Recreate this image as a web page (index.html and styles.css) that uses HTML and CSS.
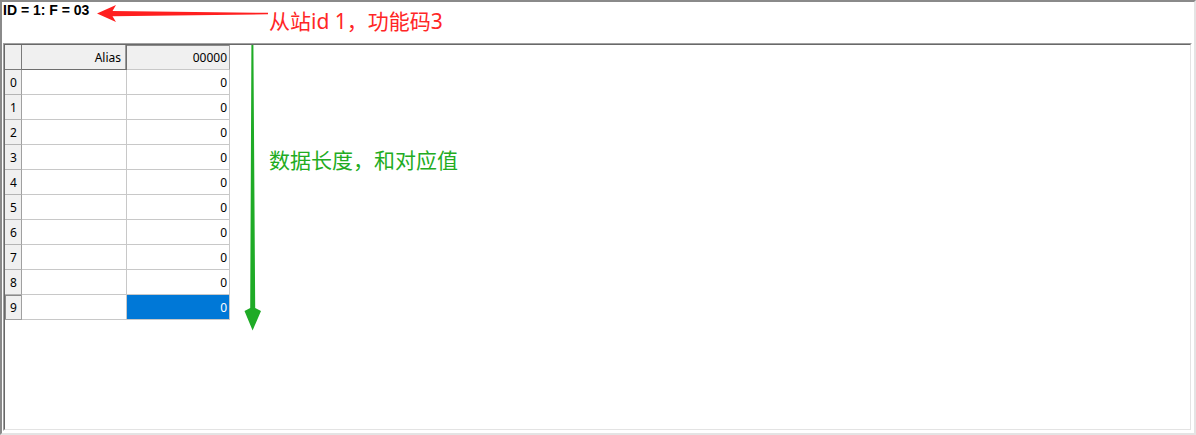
FILE: index.html
```html
<!DOCTYPE html>
<html>
<head>
<meta charset="utf-8">
<link rel="stylesheet" href="styles.css">
</head>
<body>
<div class="window">
  <div class="info">ID = 1: F = 03</div>
  <div class="tableview">
    <div class="tableview-inner">
      <div class="grid">
        <div class="hcell corner"></div>
        <div class="hcell col alias">Alias</div>
        <div class="hcell col current">00000</div>

        <div class="rhead">0</div><div class="cell"></div><div class="cell num">0</div>
        <div class="rhead">1</div><div class="cell"></div><div class="cell num">0</div>
        <div class="rhead">2</div><div class="cell"></div><div class="cell num">0</div>
        <div class="rhead">3</div><div class="cell"></div><div class="cell num">0</div>
        <div class="rhead">4</div><div class="cell"></div><div class="cell num">0</div>
        <div class="rhead">5</div><div class="cell"></div><div class="cell num">0</div>
        <div class="rhead">6</div><div class="cell"></div><div class="cell num">0</div>
        <div class="rhead">7</div><div class="cell"></div><div class="cell num">0</div>
        <div class="rhead">8</div><div class="cell"></div><div class="cell num">0</div>
        <div class="rhead current-row">9</div><div class="cell"></div><div class="cell num selected">0</div>
      </div>
    </div>
  </div>
</div>

<svg class="overlay" width="1196" height="435" viewBox="0 0 1196 435">
  <polygon class="arrow-red" points="97,13.5 116,5 112.5,11 268,12.8 268,14.3 112.5,16.3 116,22"/>
  <polygon class="arrow-green" points="251.4,45 253.4,45 255.2,308 261,311 252.6,330.5 244.5,311 250.2,308"/>
</svg>
<div class="note note-red">从站id 1，功能码3</div>
<div class="note note-green">数据长度，和对应值</div>
</body>
</html>
```
FILE: styles.css
```css
html, body {
  margin: 0;
  padding: 0;
  background: #ffffff;
}

body {
  position: relative;
  width: 1196px;
  height: 435px;
  overflow: hidden;
  font-family: "Noto Sans", "Liberation Sans", sans-serif;
}

.window {
  width: 1196px;
  height: 435px;
  box-sizing: border-box;
  border-style: solid;
  border-width: 2px;
  border-color: #8a8a8a #e4e4e4 #e4e4e4 #8a8a8a;
  background: #ffffff;
  display: flex;
  flex-direction: column;
}

.info {
  height: 41px;
  flex: 0 0 41px;
  padding-left: 1px;
  padding-top: 1px;
  box-sizing: border-box;
  font-family: "Liberation Sans", Arial, sans-serif;
  font-weight: bold;
  font-size: 14px;
  line-height: 15px;
  color: #000000;
}

.tableview {
  flex: 1;
  margin: 0 2px 2px 1px;
  border: 1px solid;
  border-color: #a0a0a0 #ffffff #ffffff #a0a0a0;
  display: flex;
}

.tableview-inner {
  flex: 1;
  border: 1px solid;
  border-color: #696969 #e3e3e3 #e3e3e3 #696969;
  background: #ffffff;
}

.grid {
  display: grid;
  grid-template-columns: 17px 105px 103px;
  grid-auto-rows: 25px;
  width: 225px;
  font-size: 12px;
  color: #000000;
}

.grid > div {
  box-sizing: border-box;
  border-right: 1px solid #c8c8c8;
  border-bottom: 1px solid #c8c8c8;
  display: flex;
  align-items: center;
  padding-top: 2px;
  line-height: 16px;
  white-space: nowrap;
}

.grid > .hcell {
  background: #f0f0f0;
  border-right-color: #a0a0a0;
  border-bottom-color: #a0a0a0;
  justify-content: flex-end;
}

.grid > .corner {
  border-right-color: #7a7a7a;
  border-bottom-color: #7a7a7a;
}

.grid > .alias {
  padding-right: 5px;
  border-right-color: #6e6e6e;
  border-bottom-color: #6e6e6e;
  box-shadow: inset -1px 0 0 #9a9a9a;
}

.grid > .current {
  padding-right: 2px;
  box-shadow: inset 0 1px 0 #8a8a8a;
  border-bottom-color: #c8c8c8;
}

.grid > .rhead {
  background: #f0f0f0;
  border-right-color: #a0a0a0;
  border-bottom-color: #b4b4b4;
  padding-left: 5px;
}

.grid > .current-row {
  border-bottom-color: #a0a0a0;
  box-shadow: inset 1px 1px 0 #8a8a8a;
}

.grid > .num {
  justify-content: flex-end;
  padding-right: 2px;
}

.grid > .selected {
  background: #0078d7;
  color: #ffffff;
}

.overlay {
  position: absolute;
  left: 0;
  top: 0;
  pointer-events: none;
}

.arrow-red {
  fill: #ff1f1f;
}

.arrow-green {
  fill: #1fab26;
}

.note {
  position: absolute;
  font-family: "Noto Sans", "Noto Sans CJK SC", sans-serif;
  font-size: 21px;
  line-height: 21px;
  white-space: nowrap;
}

.note-red {
  left: 269px;
  top: 11px;
  color: #ff2626;
}

.note-green {
  left: 269px;
  top: 150px;
  color: #22ac22;
}
```
